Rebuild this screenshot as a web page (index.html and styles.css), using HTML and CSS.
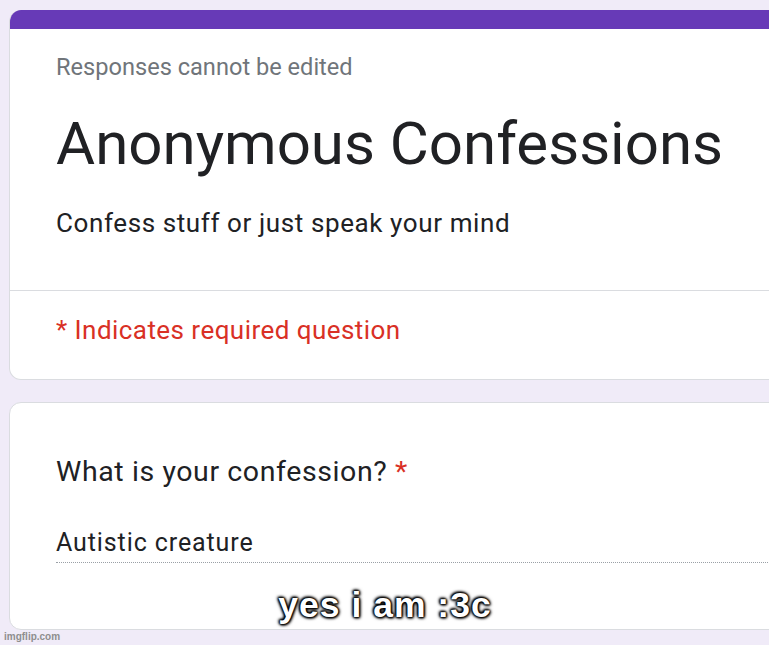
FILE: index.html
```html
<!DOCTYPE html>
<html>
<head>
<meta charset="utf-8">
<link rel="stylesheet" href="styles.css">
</head>
<body>
<div class="page">
  <div class="card header-card">
    <div class="top-bar"></div>
    <div class="header-body">
      <div class="note">Responses cannot be edited</div>
      <h1 class="title">Anonymous Confessions</h1>
      <div class="desc">Confess stuff or just speak your mind</div>
    </div>
    <div class="divider"></div>
    <div class="required">* Indicates required question</div>
  </div>
  <div class="card question-card">
    <div class="question">What is your confession? <span class="star">*</span></div>
    <div class="answer">Autistic creature</div>
  </div>
</div>
<div class="caption">yes i am :3c</div>
<div class="watermark">imgflip.com</div>
</body>
</html>
```
FILE: styles.css
```css
html, body {
  margin: 0;
  padding: 0;
}
body {
  width: 769px;
  height: 645px;
  overflow: hidden;
  background: #f0ebf8;
  font-family: Roboto, "Noto Sans", sans-serif;
  position: relative;
}
.page {
  padding: 10px 0 0 9px;
  display: flex;
  flex-direction: column;
  gap: 22px;
}
.card {
  width: 900px;
  background: #fff;
  border: 1px solid #dadce0;
  border-radius: 12px;
  box-sizing: border-box;
}
.header-card {
  border-top: none;
  overflow: hidden;
}
.top-bar {
  height: 19px;
  background: #673ab7;
}
.header-body {
  padding: 23px 0 0 46px;
  height: 261px;
  box-sizing: border-box;
}
.note {
  font-size: 23.6px;
  color: #70757a;
  line-height: 30px;
}
.title {
  margin: 24px 0 0;
  font-weight: 400;
  font-size: 60px;
  line-height: 76px;
  color: #202124;
}
.desc {
  margin-top: 25px;
  font-size: 26px;
  letter-spacing: 0.6px;
  line-height: 32px;
  color: #202124;
}
.divider {
  height: 1px;
  background: #dadce0;
}
.required {
  padding: 23px 0 33px 46px;
  font-size: 26px;
  letter-spacing: 0.45px;
  line-height: 32px;
  color: #d93025;
}
.question-card {
  height: 228px;
  padding: 52px 0 0 46px;
}
.question {
  font-size: 28.5px;
  letter-spacing: 0.6px;
  line-height: 34px;
  color: #202124;
}
.star {
  color: #d93025;
}
.answer {
  margin-top: 38px;
  font-size: 25px;
  letter-spacing: 0.9px;
  line-height: 32px;
  color: #202124;
  padding-bottom: 3px;
  border-bottom: 1px dotted #9aa0a6;
}
.caption {
  position: absolute;
  left: 0;
  right: 0;
  top: 585px;
  padding-left: 1px;
  text-align: center;
  font-family: "Liberation Sans", Arial, sans-serif;
  font-weight: 700;
  font-size: 35.5px;
  letter-spacing: 1px;
  color: #fff;
  text-shadow: 0 0 2px #000, 0 0 2px #000, 0 0 3px #000, 0 0 4px #000, 1px 1px 3px #000, -1px -1px 3px #000;
}
.watermark {
  position: absolute;
  left: 4px;
  top: 631px;
  font-family: "Liberation Sans", Arial, sans-serif;
  font-weight: 700;
  font-size: 10px;
  color: #8e8e8e;
}
```
